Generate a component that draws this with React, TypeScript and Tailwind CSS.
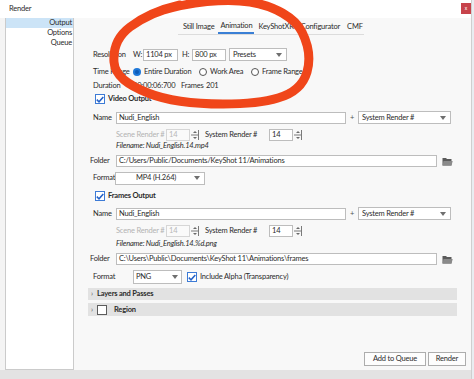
import React from "react";

const Arrow = () => (
  <svg width="6" height="4" viewBox="0 0 6 4">
    <path d="M0 0h6L3 4z" fill="#6f6f6f" />
  </svg>
);

const Spin = () => (
  <svg width="10" height="12" viewBox="0 0 10 12" className="shrink-0">
    <path d="M8.5 1v10" stroke="#7a7a7a" strokeWidth="1" />
    <path d="M1 6h8" stroke="#7a7a7a" strokeWidth="1" />
    <path d="M3 4l2-2 2 2z" fill="#6a6a6a" />
    <path d="M3 8l2 2 2-2z" fill="#6a6a6a" />
  </svg>
);

const Check = ({ on = true }: { on?: boolean }) => (
  <div
    className={
      on
        ? "w-[10px] h-[10px] shrink-0 border border-[#3d7bd6] bg-white flex items-center justify-center"
        : "w-[10px] h-[10px] shrink-0 border border-[#5c5c5c] bg-white"
    }
  >
    {on && (
      <svg width="8" height="7" viewBox="0 0 8 7">
        <path d="M0.8 3.6l2.2 2.2L7.3 0.9" stroke="#2563c9" strokeWidth="1.5" fill="none" />
      </svg>
    )}
  </div>
);

const Radio = ({ on = false }: { on?: boolean }) =>
  on ? (
    <div className="w-[8px] h-[8px] shrink-0 rounded-full bg-[#1f78d8] flex items-center justify-center">
      <div className="w-[4px] h-[4px] rounded-full bg-[#0f5cb8]" />
    </div>
  ) : (
    <div className="w-[8px] h-[8px] shrink-0 rounded-full border border-[#555] bg-white" />
  );

const Folder = () => (
  <svg width="11" height="9" viewBox="0 0 11 9" className="shrink-0">
    <path d="M0.5 1h3.5l1 1h4.5v6.5h-9z" fill="#5b5b5b" />
    <path d="M1.5 4h9.2l-1.2 4.5h-9z" fill="#8a8a8a" />
  </svg>
);

function NameRow() {
  return (
    <div className="flex items-center h-[13px]">
      <div className="w-[26px] pl-[3px]">Name</div>
      <div className="w-[230px] h-[12px] flex items-center border border-[#bdbdbd] bg-white px-[2px]">Nudi_English</div>
      <div className="w-[12px] text-center text-[#555]">+</div>
      <div className="w-[93px] h-[13px] flex items-center justify-between border border-[#bdbdbd] bg-white pl-[3px] pr-[4px]">
        <span>System Render #</span>
        <Arrow />
      </div>
    </div>
  );
}

function SceneRow() {
  return (
    <div className="flex items-center h-[13px] pl-[26px]">
      <div className="w-[50px] text-[#b3b3b3]">Scene Render #</div>
      <div className="w-[24px] h-[12px] flex items-center border border-[#d6d6d6] bg-[#fafafa] px-[2px] text-[#b8b8b8]">14</div>
      <Spin />
      <div className="w-[64px] ml-[5px]">System Render #</div>
      <div className="w-[24px] h-[12px] flex items-center border border-[#bdbdbd] bg-white px-[2px]">14</div>
      <Spin />
    </div>
  );
}

function FolderRow({ path }: { path: string }) {
  return (
    <div className="flex items-center h-[12px]">
      <div className="w-[26px]">Folder</div>
      <div className="w-[321px] h-[12px] flex items-center border border-[#bdbdbd] bg-white px-[2px]">{path}</div>
      <div className="ml-[5px]">
        <Folder />
      </div>
    </div>
  );
}

export default function App() {
  return (
    <div className="relative w-[474px] h-[379px] overflow-hidden whitespace-nowrap bg-[#e9edf1] font-['Lato',sans-serif] text-[7.5px] tracking-[-0.2px] text-[#2b2b2b] leading-none">
      <div className="w-[472px] h-[379px] flex flex-col bg-[#f4f4f4] border-r border-[#cfcfcf]">
        {/* title bar */}
        <div className="h-[18px] shrink-0 flex items-center bg-white pl-[9px]">
          <span>Render</span>
          <div className="ml-auto mb-[2px] w-[10px] h-[11px] bg-[#c7434b] flex items-center justify-center text-white text-[5px]">
            x
          </div>
        </div>

        <div className="flex flex-1 min-h-0">
          {/* sidebar */}
          <div className="ml-[5px] w-[69px] shrink-0 bg-white border border-t-0 border-[#cbcbcb] flex flex-col text-right">
            <div className="h-[10px] flex items-center justify-end pr-[1px] bg-[#cce4f7]">Output</div>
            <div className="h-[10px] flex items-center justify-end pr-[1px]">Options</div>
            <div className="h-[10px] flex items-center justify-end pr-[1px]">Queue</div>
          </div>

          {/* main */}
          <div className="flex-1 flex flex-col pl-[16px] bg-[#f8f8f8]">
            <div className="mt-[2px] ml-[88px] w-[186px] h-[15px] flex items-end border-b border-[#dcdcdc]">
              <div className="ml-[5px] pb-[4px]">Still Image</div>
              <div className="ml-[4px] px-[2px] pb-[3px] border-b-2 border-[#3a7fd5]">Animation</div>
              <div className="ml-[4px] pb-[4px]">KeyShotXR</div>
              <div className="ml-[7px] pb-[4px]">Configurator</div>
              <div className="ml-[7px] pb-[4px]">CMF</div>
            </div>

            <div className="mt-[13px] h-[13px] flex items-center">
              <div className="w-[43px] pl-[3px]">Resolution</div>
              <div className="w-[10px]">W:</div>
              <div className="w-[35px] h-[12px] flex items-center border border-[#bdbdbd] bg-white px-[2px]">1104 px</div>
              <div className="w-[10px] ml-[4px]">H:</div>
              <div className="w-[34px] h-[12px] flex items-center border border-[#bdbdbd] bg-white px-[2px]">800 px</div>
              <div className="ml-[3px] w-[58px] h-[13px] flex items-center justify-between border border-[#bdbdbd] bg-white pl-[3px] pr-[4px]">
                <span>Presets</span>
                <Arrow />
              </div>
            </div>

            <div className="mt-[5px] h-[12px] flex items-center">
              <div className="w-[43px] pl-[3px]">Time Range</div>
              <div className="w-[66px] flex items-center gap-[3px]">
                <Radio on />
                <span>Entire Duration</span>
              </div>
              <div className="w-[52px] flex items-center gap-[3px]">
                <Radio />
                <span>Work Area</span>
              </div>
              <div className="flex items-center gap-[3px]">
                <Radio />
                <span>Frame Range</span>
              </div>
            </div>

            <div className="mt-[2px] h-[12px] flex items-center">
              <div className="w-[43px] pl-[3px]">Duration</div>
              <div className="w-[48px]">00:00:06:700</div>
              <div className="w-[25px]">Frames</div>
              <div>201</div>
            </div>

            <div className="mt-[1px] h-[12px] flex items-center pl-[5px] gap-[3px] font-bold">
              <Check />
              <span>Video Output</span>
            </div>

            <div className="mt-[6px]">
              <NameRow />
            </div>
            <div className="mt-[4px]">
              <SceneRow />
            </div>
            <div className="h-[10px] flex items-center pl-[26px] italic">Filename: Nudi_English.14.mp4</div>
            <div className="mt-[4px]">
              <FolderRow path="C:/Users/Public/Documents/KeyShot 11/Animations" />
            </div>

            <div className="mt-[4px] h-[14px] flex items-center">
              <div className="w-[25px] pl-[3px]">Format</div>
              <div className="w-[90px] h-[13px] flex items-center justify-between border border-[#bdbdbd] bg-white pl-[20px] pr-[4px]">
                <span>MP4 (H.264)</span>
                <Arrow />
              </div>
            </div>

            <div className="mt-[5px] h-[12px] flex items-center pl-[5px] gap-[3px] font-bold">
              <Check />
              <span>Frames Output</span>
            </div>

            <div className="mt-[5px]">
              <NameRow />
            </div>
            <div className="mt-[4px]">
              <SceneRow />
            </div>
            <div className="mt-[2px] h-[10px] flex items-center pl-[26px] italic">Filename: Nudi_English.14.%d.png</div>
            <div className="mt-[4px]">
              <FolderRow path="C:\Users\Public\Documents\KeyShot 11\Animations\frames" />
            </div>

            <div className="mt-[5px] h-[14px] flex items-center">
              <div className="w-[43px] pl-[3px]">Format</div>
              <div className="w-[49px] h-[14px] flex items-center justify-between border border-[#bdbdbd] bg-white pl-[2px] pr-[3px]">
                <span>PNG</span>
                <Arrow />
              </div>
              <div className="ml-[5px] flex items-center gap-[3px]">
                <Check />
                <span>Include Alpha (Transparency)</span>
              </div>
            </div>

            <div className="mt-[4px] -ml-[2px] w-[369px] h-[12px] flex items-center bg-[#e2e2e2] font-bold">
              <span className="w-[9px] pl-[3px] font-normal text-[#555]">›</span>
              <span>Layers and Passes</span>
            </div>
            <div className="mt-[3px] -ml-[2px] w-[369px] h-[13px] flex items-center bg-[#e2e2e2] font-bold">
              <span className="w-[9px] pl-[3px] font-normal text-[#555]">›</span>
              <Check on={false} />
              <span className="ml-[7px]">Region</span>
            </div>

            <div className="mt-auto mb-[4px] flex justify-end pr-[5px] gap-[2px]">
              <div className="w-[62px] h-[14px] flex items-center justify-center border border-[#adadad] bg-[#fdfdfd]">Add to Queue</div>
              <div className="w-[38px] h-[14px] flex items-center justify-center border border-[#adadad] bg-[#fdfdfd]">Render</div>
            </div>
          </div>
        </div>

        <div className="h-[9px] shrink-0 bg-[#e3e3e3]" />
      </div>

      {/* hand-drawn annotation over the window */}
      <svg className="absolute inset-0 pointer-events-none" width="474" height="379" viewBox="0 0 474 379">
        <path
          d="M160 11 C190 2, 225 -2, 250 2 C275 6, 295 18, 302 32 C309 46, 311 58, 307 72 C303 86, 292 94, 278 98 C262 103, 243 104, 223 104 C195 104, 168 101, 148 93 C128 85, 115 76, 114 62 C113 48, 118 36, 130 27 C142 18, 158 10, 180 5"
          fill="none"
          stroke="#f0461a"
          strokeWidth="9"
          strokeLinecap="round"
        />
      </svg>
    </div>
  );
}
